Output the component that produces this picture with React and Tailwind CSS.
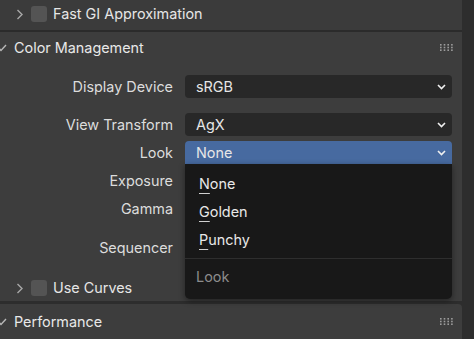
import React from "react";

const font = { fontFamily: "Inter, 'DejaVu Sans', sans-serif" };

function Chevron() {
  return (
    <svg width="8" height="11" viewBox="0 0 8 11" className="shrink-0">
      <path d="M1.5 1 L6 5.5 L1.5 10" fill="none" stroke="#a8a8a8" strokeWidth="1.4" />
    </svg>
  );
}

function SmallCaret() {
  return (
    <svg width="9" height="6" viewBox="0 0 9 6" className="shrink-0">
      <path d="M1 1 L4.5 4.5 L8 1" fill="none" stroke="#f0f0f0" strokeWidth="1.6" />
    </svg>
  );
}

function Handle() {
  const dots = [];
  for (let r = 0; r < 3; r++)
    for (let c = 0; c < 4; c++)
      dots.push(<rect key={r + "-" + c} x={c * 3.7} y={r * 2.7} width="1.6" height="1.6" fill="#9c9c9c" />);
  return (
    <svg width="14" height="8" viewBox="0 0 14 8" className="shrink-0">
      {dots}
    </svg>
  );
}

function OpenCaret() {
  return (
    <svg width="12" height="10" viewBox="0 0 12 10" className="ml-[-5px] shrink-0">
      <path d="M1 2 L6 7.5 L11 2" fill="none" stroke="#b8b8b8" strokeWidth="1.4" />
    </svg>
  );
}

function Checkbox() {
  return <div className="w-4 h-4 rounded-[3px] bg-[#545454] shrink-0" />;
}

function Dropdown({ value, active }) {
  return (
    <div
      className={
        "w-[267px] h-[23px] flex items-center justify-between pl-[11px] pr-[6px] text-[14.4px] text-[#e6e6e6] " +
        (active ? "bg-[#476aa0] rounded-t-[4px]" : "bg-[#282828] rounded-[4px]")
      }
    >
      <span>{value}</span>
      <SmallCaret />
    </div>
  );
}

function Label({ children }) {
  return <div className="w-[173px] text-right text-[14.4px] text-[#dcdcdc] shrink-0">{children}</div>;
}

function Item({ first, rest }) {
  return (
    <div className="h-[28px] flex items-center pl-[14px] text-[14.4px] text-[#e8e8e8]">
      <span className="underline decoration-[#d0d0d0] underline-offset-[4px]">{first}</span>
      <span>{rest}</span>
    </div>
  );
}

export default function App() {
  return (
    <div className="w-[474px] h-[339px] overflow-hidden bg-[#2d2d2d] flex" style={font}>
      <div className="w-[462px] h-[339px] flex flex-col overflow-hidden">
        {/* Fast GI subpanel */}
        <div className="h-[30px] shrink-0 pb-[2px] bg-[#3b3b3b] flex items-center pl-[16px] gap-[7px] text-[14.4px] text-[#e6e6e6]">
          <Chevron />
          <Checkbox />
          <span className="ml-[-1px]">Fast GI Approximation</span>
        </div>
        <div className="h-[2px] shrink-0 bg-[#2b2b2b]" />
        {/* Color Management */}
        <div className="bg-[#3d3d3d] flex flex-col h-[269px] shrink-0">
          <div className="h-[30px] shrink-0 pt-[2px] flex items-center justify-between pr-[8px]">
            <div className="flex items-center">
              <OpenCaret />
              <span className="ml-[7px] text-[14.4px] text-[#e8e8e8]">Color Management</span>
            </div>
            <Handle />
          </div>

          <div className="flex items-center gap-[12px] mt-[13px] shrink-0">
            <Label>Display Device</Label>
            <Dropdown value="sRGB" />
          </div>

          <div className="flex items-center gap-[12px] mt-[15px] shrink-0">
            <Label>View Transform</Label>
            <Dropdown value="AgX" />
          </div>

          <div className="flex items-center gap-[12px] mt-[5px] shrink-0">
            <Label>Look</Label>
            <div className="relative">
              <Dropdown value="None" active />
              <div className="absolute left-0 top-full w-[267px] h-[135px] bg-[#181818] rounded-b-[5px] shadow-[0_2px_6px_rgba(0,0,0,0.45)] z-10 flex flex-col pt-[6px]">
                <Item first="N" rest="one" />
                <Item first="G" rest="olden" />
                <Item first="P" rest="unchy" />
                <div className="h-px bg-[#2e2e2e] mt-[4px]" />
                <div className="h-[36px] flex items-center pl-[11px] text-[14.4px] text-[#8c8c8c]">Look</div>
              </div>
            </div>
          </div>

          <div className="flex items-center h-[24px] mt-[5px] shrink-0">
            <Label>Exposure</Label>
          </div>
          <div className="flex items-center h-[24px] mt-[4px] shrink-0">
            <Label>Gamma</Label>
          </div>
          <div className="flex items-center h-[24px] mt-[15px] shrink-0">
            <Label>Sequencer</Label>
          </div>

          <div className="flex items-center pl-[16px] gap-[7px] text-[14.4px] text-[#e6e6e6] h-[20px] mt-[18px] shrink-0">
            <Chevron />
            <Checkbox />
            <span className="ml-[-1px]">Use Curves</span>
          </div>
        </div>
        <div className="h-[3px] shrink-0" />
        {/* Performance */}
        <div className="h-[35px] shrink-0 bg-[#3d3d3d] rounded-tr-[4px] flex items-center justify-between pr-[8px] pt-[1px]">
          <div className="flex items-center">
            <OpenCaret />
            <span className="ml-[7px] text-[14.4px] text-[#e8e8e8]">Performance</span>
          </div>
          <Handle />
        </div>
      </div>
    </div>
  );
}
